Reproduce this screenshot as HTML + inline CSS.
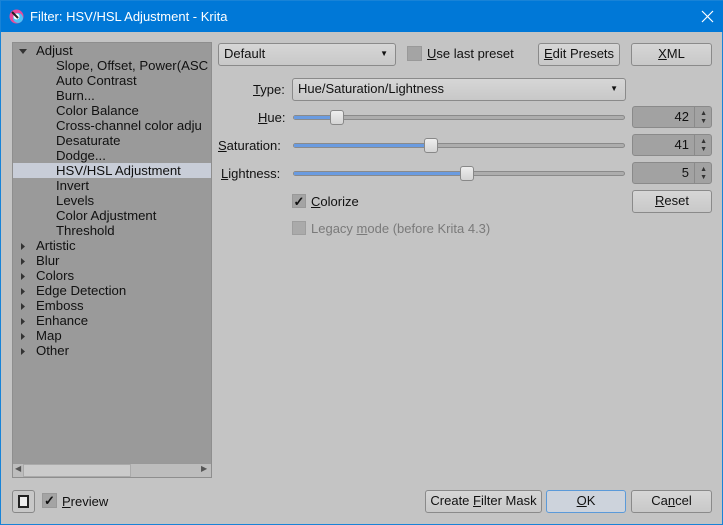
<!DOCTYPE html><html><head><style>
*{box-sizing:border-box}
body{margin:0;width:723px;height:525px;overflow:hidden;font-family:"Liberation Sans",sans-serif;font-size:13px;color:#111}
.win{position:absolute;left:0;top:0;width:723px;height:525px;background:#c4c4c4;border:1px solid #1883d7}
.title{position:absolute;left:0;top:0;width:723px;height:31px;background:#0078d7;color:#fff;font-size:13px}
.a{position:absolute;white-space:nowrap}
.btn{position:absolute;border:1px solid #8a8a8a;border-radius:3px;background:linear-gradient(#d6d6d6,#c8c8c8);text-align:center;line-height:20px;font-size:13px}
.tree{position:absolute;left:11px;top:41px;width:200px;height:436px;background:#9a9a9a;border:1px solid #8e8e8e;overflow:hidden}
.row{position:absolute;left:0;width:198px;height:15px;line-height:15px;white-space:nowrap;font-size:13.2px}
.tri{position:absolute;left:7px;width:0;height:0}
.track{position:absolute;left:292px;width:332px;height:5px;border:1px solid #8a8a8a;border-radius:3px;background:#adadad}
.fill{position:absolute;left:0;top:0;height:3px;background:#6a9be0}
.knob{position:absolute;top:-6px;width:14px;height:15px;border:1px solid #888;border-radius:3px;background:linear-gradient(#eee,#d4d4d4)}
.spin{position:absolute;left:631px;width:80px;height:22px;border:1px solid #8a8a8a;border-radius:3px;background:#a2a2a2;text-align:right;padding-right:22px;line-height:20px}
.spin::after{content:"";position:absolute;right:16px;top:0;height:20px;border-left:1px solid #8a8a8a}
.ar{position:absolute;right:4px;font-size:7px;color:#333;line-height:7px}
u{text-decoration:underline}
</style></head><body><div class="win">
<div class="title">
<svg class="a" style="left:8px;top:8px" width="15" height="15" viewBox="0 0 15 15"><circle cx="7.5" cy="7.5" r="7" fill="#e84c9c"/><circle cx="9" cy="9" r="5" fill="#4fc3f7"/><circle cx="7.5" cy="7.5" r="3" fill="#fff"/><path d="M3 3 L9 9" stroke="#222" stroke-width="2"/></svg>
<div class="a" style="left:29px;top:8px">Filter: HSV/HSL Adjustment - Krita</div>
<svg class="a" style="left:700px;top:9px" width="13" height="13"><path d="M1 1L12 12M12 1L1 12" stroke="#fff" stroke-width="1.2"/></svg>
</div>
<div class="tree">
<div class="tri" style="top:6px;left:6px;border-left:4px solid transparent;border-right:4px solid transparent;border-top:5px solid #333"></div>
<div class="row" style="top:0px;left:23px">Adjust</div>
<div class="row" style="top:15px;left:43px">Slope, Offset, Power(ASC</div>
<div class="row" style="top:30px;left:43px">Auto Contrast</div>
<div class="row" style="top:45px;left:43px">Burn...</div>
<div class="row" style="top:60px;left:43px">Color Balance</div>
<div class="row" style="top:75px;left:43px">Cross-channel color adju</div>
<div class="row" style="top:90px;left:43px">Desaturate</div>
<div class="row" style="top:105px;left:43px">Dodge...</div>
<div class="row" style="top:120px;left:0;background:#c8cdd8;width:200px;padding-left:43px">HSV/HSL Adjustment</div>
<div class="row" style="top:135px;left:43px">Invert</div>
<div class="row" style="top:150px;left:43px">Levels</div>
<div class="row" style="top:165px;left:43px">Color Adjustment</div>
<div class="row" style="top:180px;left:43px">Threshold</div>
<div class="row" style="top:195px;left:23px">Artistic</div>
<div class="row" style="top:210px;left:23px">Blur</div>
<div class="row" style="top:225px;left:23px">Colors</div>
<div class="row" style="top:240px;left:23px">Edge Detection</div>
<div class="row" style="top:255px;left:23px">Emboss</div>
<div class="row" style="top:270px;left:23px">Enhance</div>
<div class="row" style="top:285px;left:23px">Map</div>
<div class="row" style="top:300px;left:23px">Other</div>
<svg class="a" style="left:6px;top:196px" width="8" height="120"><g fill="#333"><path d="M2 4l4 3.5-4 3.5z"/><path d="M2 19l4 3.5-4 3.5z"/><path d="M2 34l4 3.5-4 3.5z"/><path d="M2 49l4 3.5-4 3.5z"/><path d="M2 64l4 3.5-4 3.5z"/><path d="M2 79l4 3.5-4 3.5z"/><path d="M2 94l4 3.5-4 3.5z"/><path d="M2 109l4 3.5-4 3.5z"/></g></svg>
<div class="a" style="left:0;top:420px;width:198px;height:14px;background:#bdbdbd;border-top:1px solid #999"></div>
<div class="a" style="left:10px;top:421px;width:108px;height:13px;background:#cbcbcb;border:1px solid #aaa"></div>
<div class="a" style="left:2px;top:421px;font-size:8px;color:#555">◀</div>
<div class="a" style="left:188px;top:421px;font-size:8px;color:#555">▶</div>
</div>
<div class="btn" style="left:217px;top:42px;width:178px;height:23px;text-align:left;padding-left:5px"> Default<span class="a" style="right:7px;top:0;font-size:8px">▼</span></div>
<div class="a" style="left:406px;top:45px;width:15px;height:15px;background:#a4a4a4;border:1px solid #999"></div>
<div class="a" style="left:426px;top:45px"><u>U</u>se last preset</div>
<div class="btn" style="left:537px;top:42px;width:82px;height:23px"><u>E</u>dit Presets</div>
<div class="btn" style="left:630px;top:42px;width:81px;height:23px"><u>X</u>ML</div>
<div class="a" style="left:252px;top:81px"><u>T</u>ype:</div>
<div class="btn" style="left:291px;top:77px;width:334px;height:23px;text-align:left;padding-left:5px">Hue/Saturation/Lightness<span class="a" style="right:7px;top:0;font-size:8px">▼</span></div>
<div class="a" style="left:257px;top:109px"><u>H</u>ue:</div>
<div class="a" style="left:217px;top:137px"><u>S</u>aturation:</div>
<div class="a" style="left:220px;top:165px"><u>L</u>ightness:</div>
<div class="track" style="top:114px"><div class="fill" style="width:40px"></div><div class="knob" style="left:36px"></div></div>
<div class="track" style="top:142px"><div class="fill" style="width:133px"></div><div class="knob" style="left:130px"></div></div>
<div class="track" style="top:170px"><div class="fill" style="width:170px"></div><div class="knob" style="left:166px"></div></div>
<div class="spin" style="top:105px">42<span class="ar" style="top:3px">▲</span><span class="ar" style="top:11px">▼</span></div>
<div class="spin" style="top:133px">41<span class="ar" style="top:3px">▲</span><span class="ar" style="top:11px">▼</span></div>
<div class="spin" style="top:161px">5<span class="ar" style="top:3px">▲</span><span class="ar" style="top:11px">▼</span></div>
<div class="a" style="left:291px;top:193px;width:14px;height:14px;background:#a4a4a4;border:1px solid #999;font-size:13px;line-height:13px;text-align:center;font-weight:bold">✓</div>
<div class="a" style="left:310px;top:193px"><u>C</u>olorize</div>
<div class="btn" style="left:631px;top:189px;width:80px;height:23px"><u>R</u>eset</div>
<div class="a" style="left:291px;top:220px;width:14px;height:14px;background:#aaa;border:1px solid #9e9e9e"></div>
<div class="a" style="left:310px;top:220px;color:#7a7a7a">Legacy <u>m</u>ode (before Krita 4.3)</div>
<div class="a" style="left:11px;top:489px;width:23px;height:23px;border:1px solid #888;border-radius:3px;background:#c8c8c8"><div class="a" style="left:5px;top:4px;width:11px;height:13px;border:2px solid #222;background:#eee"></div></div>
<div class="a" style="left:41px;top:492px;width:15px;height:15px;background:#a4a4a4;border:1px solid #999;font-weight:bold;line-height:14px;text-align:center">✓</div>
<div class="a" style="left:61px;top:493px"><u>P</u>review</div>
<div class="btn" style="left:424px;top:489px;width:117px;height:23px">Create <u>F</u>ilter Mask</div>
<div class="btn" style="left:545px;top:489px;width:80px;height:23px;border-color:#5b9ad9;background:#cdd3dc"><u>O</u>K</div>
<div class="btn" style="left:630px;top:489px;width:81px;height:23px">Ca<u>n</u>cel</div>
</div></body></html>
